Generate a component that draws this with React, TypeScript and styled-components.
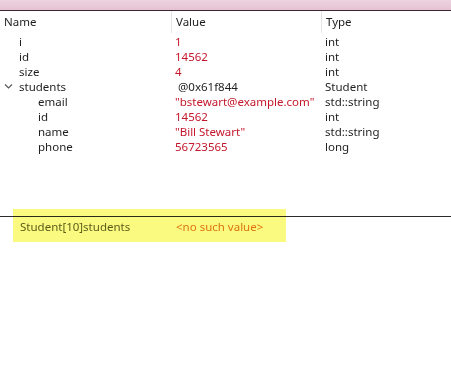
import * as React from 'react';
import styled, { createGlobalStyle } from 'styled-components';

const GlobalStyle = createGlobalStyle`
  html, body {
    margin: 0;
    padding: 0;
    background: #ffffff;
  }
  body {
    font-family: 'Noto Sans', 'Open Sans', sans-serif;
    font-size: 11.5px;
    color: #1e1e1e;
  }
`;

const Page = styled.div`
  width: 451px;
  height: 384px;
  overflow: hidden;
  display: flex;
  flex-direction: column;
`;

const TitleBand = styled.div`
  height: 10px;
  background: linear-gradient(#edd3df, #e4c3d3);
  border-bottom: 1px solid #3b2533;
`;

const Grid = styled.div`
  display: grid;
  grid-template-columns: 171px 150px 1fr;
`;

const HeaderCell = styled.div<{ $divider?: boolean }>`
  height: 22px;
  line-height: 22px;
  padding-left: 4px;
  border-left: ${p => (p.$divider ? '1px solid #e5e5e5' : 'none')};
  color: #1e1e1e;
`;

const Rows = styled.div`
  padding-top: 1px;
  height: 182px;
`;

const Cell = styled.div<{ $indent?: number; $tone?: 'value' | 'plain' }>`
  height: 15px;
  line-height: 15px;
  white-space: pre;
  display: flex;
  align-items: center;
  overflow: hidden;
  padding-left: ${p => (p.$indent ?? 0) + 4}px;
  color: ${p => (p.$tone === 'value' ? '#c4162a' : '#1e1e1e')};
`;

const Twisty = styled.svg`
  width: 9px;
  height: 9px;
  margin-left: -15px;
  margin-right: 6px;
  flex: none;
`;

const Divider = styled.div`
  height: 1px;
  background: #2b2b2b;
`;

const WatchSection = styled.div`
  position: relative;
`;

const Highlight = styled.div`
  position: absolute;
  left: 13px;
  top: -8px;
  width: 273px;
  height: 33px;
  background: #fafa80;
  mix-blend-mode: multiply;
  pointer-events: none;
`;

const WatchRow = styled.div`
  display: grid;
  grid-template-columns: 156px 1fr;
  height: 17px;
  line-height: 17px;
  margin-top: 1px;
  padding-left: 20px;
`;

const WatchName = styled.span`
  color: #5e5e30;
`;

const WatchError = styled.span`
  color: #e4761b;
`;

type Row = {
  name: string;
  value: string;
  type: string;
  depth: number;
  expanded?: boolean;
};

const rows: Row[] = [
  { name: 'i', value: '1', type: 'int', depth: 1 },
  { name: 'id', value: '14562', type: 'int', depth: 1 },
  { name: 'size', value: '4', type: 'int', depth: 1 },
  { name: 'students', value: ' @0x61f844', type: 'Student', depth: 1, expanded: true },
  { name: 'email', value: '"bstewart@example.com"', type: 'std::string', depth: 2 },
  { name: 'id', value: '14562', type: 'int', depth: 2 },
  { name: 'name', value: '"Bill Stewart"', type: 'std::string', depth: 2 },
  { name: 'phone', value: '56723565', type: 'long', depth: 2 },
];

export default function App() {
  return (
    <Page>
      <GlobalStyle />
      <TitleBand />
      <Grid>
        <HeaderCell>Name</HeaderCell>
        <HeaderCell $divider>Value</HeaderCell>
        <HeaderCell $divider>Type</HeaderCell>
      </Grid>
      <Rows>
        <Grid>
          {rows.map((r, i) => (
            <React.Fragment key={i}>
              <Cell $indent={r.depth === 1 ? 15 : 34}>
                {r.expanded && (
                  <Twisty viewBox="0 0 9 9">
                    <path d="M1 2.5 L4.5 6 L8 2.5" fill="none" stroke="#555" strokeWidth="1.1" />
                  </Twisty>
                )}
                {r.name}
              </Cell>
              <Cell $tone={r.expanded ? 'plain' : 'value'}>{r.value}</Cell>
              <Cell>{r.type}</Cell>
            </React.Fragment>
          ))}
        </Grid>
      </Rows>
      <Divider />
      <WatchSection>
        <WatchRow>
          <WatchName>Student[10]students</WatchName>
          <WatchError>&lt;no such value&gt;</WatchError>
        </WatchRow>
        <Highlight />
      </WatchSection>
    </Page>
  );
}
